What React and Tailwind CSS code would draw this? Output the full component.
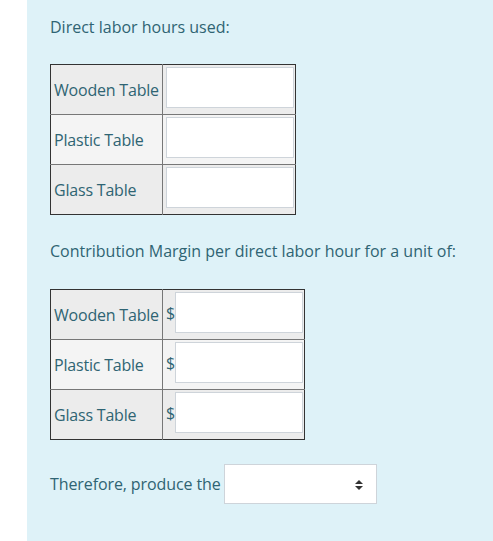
const FONT = { fontFamily: '"Open Sans", "Noto Sans", sans-serif' };

const ITEMS = ["Wooden Table", "Plastic Table", "Glass Table"];

const rowBg = (i) => (i % 2 === 1 ? "bg-[#f4f4f4]" : "bg-[#ececec]");

function TextBox() {
  return (
    <input
      type="text"
      className="block w-[128px] h-[41px] bg-white border border-[#ced4da] outline-none"
    />
  );
}

function ItemTable({ dollar }) {
  return (
    <table className="border-collapse border border-[#333]">
      <tbody>
        {ITEMS.map((item, i) => (
          <tr key={item} className={`${rowBg(i)} h-[50px] ${i > 0 ? "border-t border-[#777]" : ""}`}>
            <td className="border-r border-[#777] pl-[3px] pr-0 align-middle whitespace-nowrap w-[112px] tracking-[-0.2px]">
              {item}
            </td>
            <td className="align-top pt-[2px] pl-[3px] pr-[1px]">
              <div className="flex items-center">
                {dollar && <span className="w-[9px]">$</span>}
                <TextBox />
              </div>
            </td>
          </tr>
        ))}
      </tbody>
    </table>
  );
}

export default function App() {
  return (
    <div className="w-[493px] h-[541px] bg-white overflow-hidden" style={FONT}>
      <div className="ml-[27px] h-full bg-[#def2f8] pl-[23px] pt-[15px] text-[16px] leading-[24px] text-[#2f6473]">
        <p>Direct labor hours used:</p>
        <div className="mt-[25px]">
          <ItemTable />
        </div>
        <p className="mt-[24px]">Contribution Margin per direct labor hour for a unit of:</p>
        <div className="mt-[26px]">
          <ItemTable dollar />
        </div>
        <div className="mt-[24px] flex items-center gap-[3px]">
          <span className="tracking-[-0.1px]">Therefore, produce the</span>
          <div className="relative w-[153px] h-[40px] bg-white border border-[#ced4da]">
            <svg className="absolute right-[13px] top-[15px]" width="8" height="10" viewBox="0 0 8 10">
              <path d="M4 0 L8 4 L0 4 Z" fill="#333" />
              <path d="M0 6 L8 6 L4 10 Z" fill="#333" />
            </svg>
          </div>
        </div>
      </div>
    </div>
  );
}
